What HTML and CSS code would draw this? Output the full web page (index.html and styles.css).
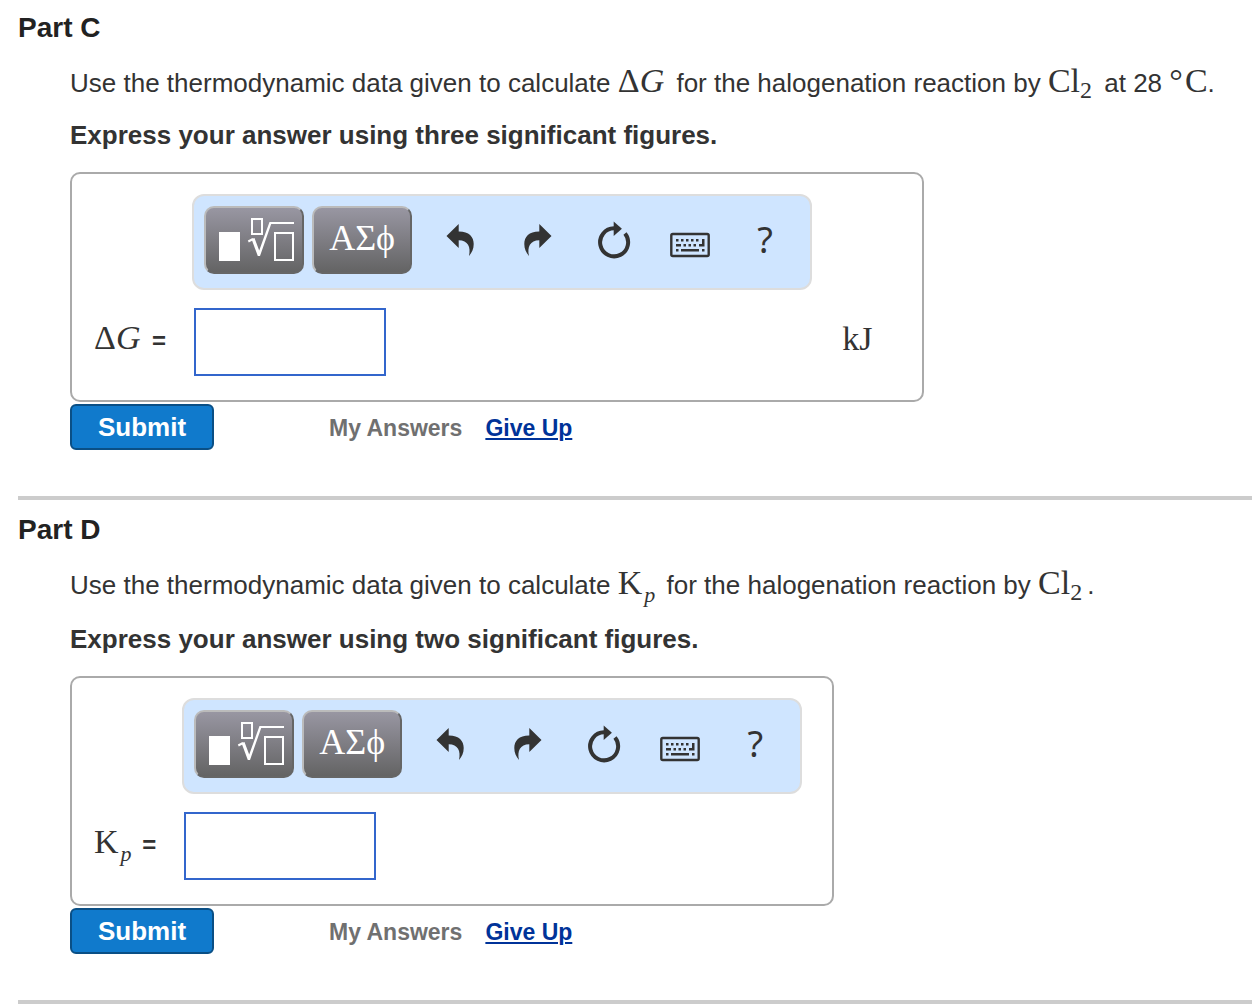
FILE: index.html
```html
<!DOCTYPE html>
<html lang="en">
<head>
<meta charset="utf-8">
<title>Thermodynamics: Parts C and D</title>
<link rel="stylesheet" href="styles.css">
</head>
<body>
<svg class="sprite" aria-hidden="true">
  <symbol id="i-template" viewBox="0 0 100 68">
    <path fill="#fff" d="M15 26h21v29H15z"/>
    <path fill="none" stroke="#fff" stroke-width="2" d="M48 13h10v15H48zM71 27h18v27H71z"/>
    <path fill="none" stroke="#fff" stroke-width="2" d="M44.300 35.500 49 33"/>
    <path fill="#fff" d="M47.500 33 50.500 32 55.200 44.500 65.500 16H90v2H67.200L56 50H53.800z"/>
  </symbol>
  <symbol id="i-undo" viewBox="0 0 76 68">
    <path fill="#333" d="M23.500 30 35.700 18V25.600C46 25.500 50.700 31 50.700 38C50.700 43 49 46.500 46 50C48 41 45 34.500 35.700 34.300V42z"/>
  </symbol>
  <symbol id="i-redo" viewBox="0 0 76 68">
    <path fill="#333" d="M52.500 30 40.300 18V25.600C30 25.500 25.300 31 25.300 38C25.300 43 27 46.500 30 50C28 41 31 34.500 40.300 34.300V42z"/>
  </symbol>
  <symbol id="i-reset" viewBox="0 0 76 68">
    <path fill="none" stroke="#333" stroke-width="4" d="M50 27.500A14 14 0 1 1 39 22.300"/>
    <path fill="#333" d="M38.700 15.500 46.900 22.700 38.700 30z"/>
  </symbol>
  <symbol id="i-keyboard" viewBox="0 0 76 68">
    <rect x="20.300" y="28" width="37.400" height="22" rx="1.500" fill="none" stroke="#333" stroke-width="2.400"/>
    <path fill="#333" d="M25 33h2.500v2.500H25zM30 33h2.500v2.500H30zM35 33h2.500v2.500H35zM40 33h2.500v2.500H40zM45 33h2.500v2.500H45zM51 33h2.500v7.500H48V38h3zM25 38h5v2.500h-5zM32.500 38H35v2.500h-2.500zM37.500 38H40v2.500h-2.500zM42.500 38H45v2.500h-2.500zM25 43h2.500v2.500H25zM30 43h18v2.500H30zM51 43h2.500v2.500H51z"/>
  </symbol>
</svg>

<main>
  <section class="part">
    <h2 class="part-title">Part C</h2>
    <div class="part-body">
      <p class="question">Use the thermodynamic data given to calculate <span class="math">Δ<i>G</i></span> for the halogenation reaction by <span class="math">Cl<sub>2</sub></span> at 28 <span class="math unit"><span class="degree">°</span>C</span>.</p>
      <p class="instruction">Express your answer using three significant figures.</p>
      <form>
        <div class="answer">
          <label class="answer-label" for="answer-c"><span class="math">Δ<i>G</i></span> =</label>
          <div class="toolbar" role="toolbar">
            <button type="button" class="tool-button" aria-label="Templates"><svg><use href="#i-template"/></svg></button>
            <button type="button" class="tool-button">ΑΣϕ</button>
            <div class="tool-icons">
              <button type="button" class="icon-button" aria-label="Undo"><svg><use href="#i-undo"/></svg></button>
              <button type="button" class="icon-button" aria-label="Redo"><svg><use href="#i-redo"/></svg></button>
              <button type="button" class="icon-button" aria-label="Reset"><svg><use href="#i-reset"/></svg></button>
              <button type="button" class="icon-button" aria-label="Keyboard"><svg><use href="#i-keyboard"/></svg></button>
              <button type="button" class="icon-button">?</button>
            </div>
          </div>
          <input class="answer-input" id="answer-c" type="text" autocomplete="off">
          <span class="answer-unit math unit">kJ</span>
        </div>
        <div class="actions">
          <button type="submit" class="submit">Submit</button>
          <span class="my-answers">My Answers</span>
          <a class="give-up" href="#">Give Up</a>
        </div>
      </form>
    </div>
  </section>

  <section class="part">
    <h2 class="part-title">Part D</h2>
    <div class="part-body">
      <p class="question question-deep">Use the thermodynamic data given to calculate <span class="math kp">K<sub><i>p</i></sub></span> for the halogenation reaction by <span class="math">Cl<sub>2</sub></span>.</p>
      <p class="instruction">Express your answer using two significant figures.</p>
      <form>
        <div class="answer">
          <label class="answer-label" for="answer-d"><span class="math kp">K<sub><i>p</i></sub></span> =</label>
          <div class="toolbar" role="toolbar">
            <button type="button" class="tool-button" aria-label="Templates"><svg><use href="#i-template"/></svg></button>
            <button type="button" class="tool-button">ΑΣϕ</button>
            <div class="tool-icons">
              <button type="button" class="icon-button" aria-label="Undo"><svg><use href="#i-undo"/></svg></button>
              <button type="button" class="icon-button" aria-label="Redo"><svg><use href="#i-redo"/></svg></button>
              <button type="button" class="icon-button" aria-label="Reset"><svg><use href="#i-reset"/></svg></button>
              <button type="button" class="icon-button" aria-label="Keyboard"><svg><use href="#i-keyboard"/></svg></button>
              <button type="button" class="icon-button">?</button>
            </div>
          </div>
          <input class="answer-input" id="answer-d" type="text" autocomplete="off">
        </div>
        <div class="actions">
          <button type="submit" class="submit">Submit</button>
          <span class="my-answers">My Answers</span>
          <a class="give-up" href="#">Give Up</a>
        </div>
      </form>
    </div>
  </section>
</main>
</body>
</html>
```
FILE: styles.css
```css
* {
  box-sizing: border-box;
}

body {
  margin: 0;
  background: #fff;
  color: #333;
  font-family: "Liberation Sans", Arial, sans-serif;
  font-size: 26px;
}

button {
  font: inherit;
  cursor: pointer;
}

.sprite {
  display: none;
}

.part {
  margin-left: 18px;
  padding: 12px 0 46px;
  border-bottom: 4px solid #ccc;
}

.part:first-child {
  padding-top: 10px;
}

.part-title {
  margin: 0;
  color: #222;
  font-size: 28px;
  line-height: 36px;
}

.part-body {
  padding-left: 52px;
}

.question {
  margin: 0;
  padding-top: 16px;
  line-height: 42px;
}

.question-deep {
  padding-bottom: 2px;
}

.instruction {
  margin: 0;
  padding: 12px 0 18px;
  font-weight: bold;
  line-height: 38px;
}

.math {
  margin-right: 5px;
  font-family: "Liberation Serif", "Times New Roman", serif;
  font-size: 34px;
  font-weight: normal;
  line-height: 1;
}

.math sub {
  font-size: 24px;
  line-height: 0;
  vertical-align: -6px;
}

.kp,
.unit {
  margin-right: 0;
}

.kp sub {
  margin: 0 4px 0 2px;
  font-size: 22px;
  vertical-align: -8px;
}

.degree {
  margin-right: 2px;
}

.answer {
  display: grid;
  grid-template-columns: auto 620px auto;
  width: fit-content;
  padding: 20px 30px 24px 22px;
  border: 2px solid #aaa;
  border-radius: 10px;
}

.answer-label {
  grid-row: 2;
  align-self: center;
  padding: 10px 26px 0 0;
  font-size: 24px;
  font-weight: bold;
  white-space: nowrap;
}

.toolbar {
  display: flex;
  grid-column: 2;
  gap: 8px;
  padding: 10px 10px 14px;
  border: 2px solid #ddd;
  border-radius: 12px;
  background: #cfe5ff;
}

.tool-button {
  flex: none;
  width: 100px;
  height: 68px;
  padding: 0 0 4px;
  border: 2px solid;
  border-color: #bbb #666 #666 #bbb;
  border-radius: 10px;
  background: linear-gradient(#9a98a4, #626262) border-box;
  color: #fff;
  font-family: "Liberation Serif", "Times New Roman", serif;
  font-size: 36px;
}

.tool-button svg {
  display: block;
  width: 100px;
  height: 68px;
  margin: -2px -2px -6px;
}

.tool-icons {
  display: flex;
  flex: none;
  margin-left: 3px;
}

.icon-button {
  width: 76px;
  height: 68px;
  padding: 0;
  border: 0;
  background: none;
  color: #333;
  font-family: "Noto Sans", "Open Sans", sans-serif;
  font-size: 36px;
  line-height: 68px;
}

.icon-button svg {
  display: block;
  width: 76px;
  height: 68px;
}

.answer-input {
  grid-column: 2;
  width: 192px;
  height: 68px;
  margin: 18px 0 0 2px;
  padding: 0 12px;
  border: 2px solid #36c;
  background: #fff;
  color: #333;
  font: inherit;
}

.answer-unit {
  grid-row: 2;
  grid-column: 3;
  align-self: center;
  padding: 12px 20px 0 30px;
}

.actions {
  display: flex;
  align-items: baseline;
  margin-top: 2px;
  font-size: 23px;
  font-weight: bold;
}

.submit {
  width: 144px;
  height: 46px;
  padding: 0;
  border: 2px solid #0a4f85;
  border-radius: 6px;
  background: #107acc;
  color: #fff;
  font-size: 26px;
}

.my-answers {
  margin-left: 115px;
  color: #707070;
}

.give-up {
  margin-left: 23px;
  color: #039;
}
```
